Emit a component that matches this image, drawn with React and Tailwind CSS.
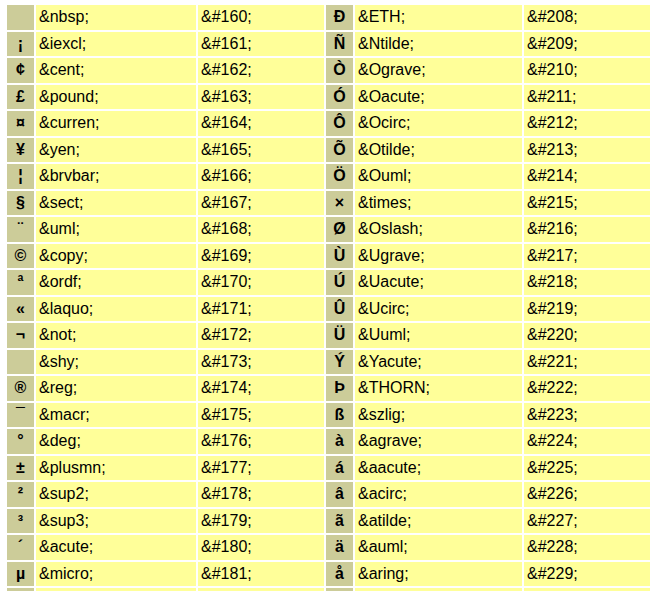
import React from "react";

const left = [
  [160, "nbsp"], [161, "iexcl"], [162, "cent"], [163, "pound"], [164, "curren"],
  [165, "yen"], [166, "brvbar"], [167, "sect"], [168, "uml"], [169, "copy"],
  [170, "ordf"], [171, "laquo"], [172, "not"], [173, "shy"], [174, "reg"],
  [175, "macr"], [176, "deg"], [177, "plusmn"], [178, "sup2"], [179, "sup3"],
  [180, "acute"], [181, "micro"], [182, "para"],
];
const right = [
  [208, "ETH"], [209, "Ntilde"], [210, "Ograve"], [211, "Oacute"], [212, "Ocirc"],
  [213, "Otilde"], [214, "Ouml"], [215, "times"], [216, "Oslash"], [217, "Ugrave"],
  [218, "Uacute"], [219, "Ucirc"], [220, "Uuml"], [221, "Yacute"], [222, "THORN"],
  [223, "szlig"], [224, "agrave"], [225, "aacute"], [226, "acirc"], [227, "atilde"],
  [228, "auml"], [229, "aring"], [230, "aelig"],
];

function Group({ code, name }) {
  const ch = code === 160 || code === 173 ? "\u00a0" : String.fromCharCode(code);
  return (
    <>
      <div className="bg-[#cccc99] py-[3px] text-center font-bold leading-[18.5px]">{ch}</div>
      <div className="bg-[#ffff99] px-[3px] py-[3px] leading-[18.5px]">&amp;{name};</div>
      <div className="bg-[#ffff99] px-[3px] py-[3px] leading-[18.5px]">&amp;#{code};</div>
    </>
  );
}

export default function App() {
  return (
    <div className="h-[591px] w-[656px] overflow-hidden bg-white text-black" style={{ fontFamily: '"Liberation Sans", Arial, sans-serif' }}>
      <div className="pt-[5px] pl-[7px]">
        <div className="grid grid-cols-[27px_160px_126px_27px_167px_126px] gap-[2px] text-[16px]">
          {left.map((l, i) => (
            <React.Fragment key={l[0]}>
              <Group code={l[0]} name={l[1]} />
              <Group code={right[i][0]} name={right[i][1]} />
            </React.Fragment>
          ))}
        </div>
      </div>
    </div>
  );
}
